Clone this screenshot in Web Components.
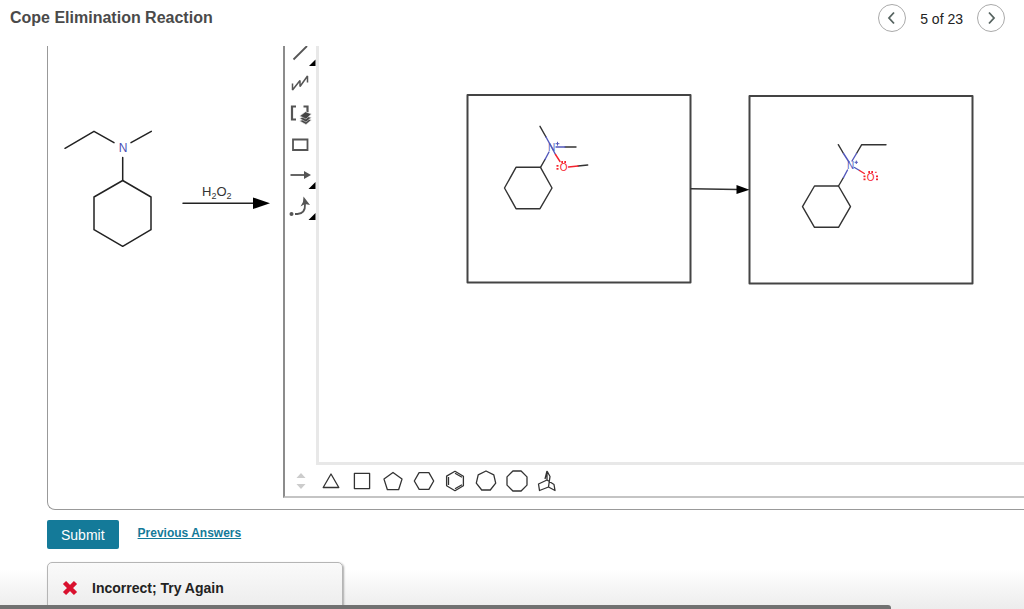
<!DOCTYPE html>
<html lang="en">
<head>
<meta charset="utf-8">
<meta name="viewport" content="width=device-width, initial-scale=1">
<title>Cope Elimination Reaction</title>
<style>
    body {
        margin: 0;
        height: 100vh;
        overflow: hidden;
        font-family: "Liberation Sans", Arial, sans-serif;
        color: #222;
        background: linear-gradient(to top, #ececec, #fff 40px);
    }
</style>
</head>
<body>
<question-page>
    <page-header slot="header" heading="Cope Elimination Reaction" position="5 of 23"></page-header>
    <work-panel>
        <reaction-prompt slot="prompt"></reaction-prompt>
        <structure-editor slot="editor"></structure-editor>
    </work-panel>
    <answer-actions></answer-actions>
    <answer-feedback>Incorrect; Try Again</answer-feedback>
    <scroll-strip slot="overlay"></scroll-strip>
</question-page>

<script>
function attach(element, html) {
    const template = document.createElement('template');
    template.innerHTML = html;
    element.attachShadow({ mode: 'open' });
    element.shadowRoot.appendChild(template.content.cloneNode(true));
}

class QuestionPage extends HTMLElement {
    constructor() {
        super();
        attach(this, `
    <style>
        :host {
            display: block;
        }
        main {
            display: flex;
            flex-direction: column;
            padding-left: 47px;
        }
    </style>
    <slot name="header"></slot>
    <main><slot></slot></main>
    <slot name="overlay"></slot>
    `);
    }
}

class PageHeader extends HTMLElement {
    constructor() {
        super();
        attach(this, `
    <style>
        :host {
            display: flex;
            justify-content: space-between;
            height: 46px;
            padding: 0 19px 0 10px;
        }
        h1 {
            margin: 8px 0 0;
            font-size: 16px;
            line-height: 20px;
            color: #4a4a4a;
        }
        nav {
            display: flex;
            align-items: center;
            gap: 14px;
            height: 36px;
            font-size: 14px;
        }
        span {
            padding-top: 2px;
        }
        button {
            width: 28px;
            height: 28px;
            padding: 0;
            border: 1px solid #aaa;
            border-radius: 50%;
            background: #fff;
        }
        svg {
            display: block;
            margin: auto;
            fill: none;
            stroke: #566360;
            stroke-width: 1.8;
        }
    </style>
    <h1></h1>
    <nav aria-label="Questions">
        <button type="button" aria-label="Previous question">
            <svg width="14" height="14" viewBox="0 0 14 14"><path d="M9 1.500 4 7l5 5.500"/></svg>
        </button>
        <span></span>
        <button type="button" aria-label="Next question">
            <svg width="14" height="14" viewBox="0 0 14 14"><path d="M5 1.500 10 7l-5 5.500"/></svg>
        </button>
    </nav>
    `);
    }

    connectedCallback() {
        this.shadowRoot.querySelector('h1').textContent = this.getAttribute('heading');
        this.shadowRoot.querySelector('span').textContent = this.getAttribute('position');
    }
}

class WorkPanel extends HTMLElement {
    constructor() {
        super();
        attach(this, `
    <style>
        :host {
            display: grid;
            grid-template-columns: 235px 1fr;
            padding-bottom: 11px;
            border: solid #999;
            border-width: 0 0 1px 1px;
            border-bottom-left-radius: 8px;
        }
    </style>
    <slot name="prompt"></slot>
    <slot name="editor"></slot>
    `);
    }
}

class ReactionPrompt extends HTMLElement {
    constructor() {
        super();
        attach(this, `
    <style>
        :host {
            display: block;
        }
        svg {
            display: block;
            fill: none;
            stroke: #222;
            stroke-width: 1.5;
            stroke-linecap: round;
            stroke-linejoin: round;
        }
        text {
            stroke: none;
            fill: #333;
            font-size: 13px;
        }
        .sub {
            font-size: 9px;
        }
        .nitrogen {
            fill: #4a50b4;
            font-size: 12px;
            text-anchor: middle;
        }
        .head {
            fill: #000;
            stroke: none;
        }
    </style>
    <svg width="235" height="220" viewBox="48 46 235 220" role="img" aria-label="N-ethyl-N-methylcyclohexanamine treated with hydrogen peroxide">
        <path d="M65 148.300 94 131.300 114 142.700M131 142.700 151.300 131.300M122.700 157.500V180.500"/>
        <path d="M122.700 180.500 151 197V229.700L122.700 246.300 94 229.700V197Z"/>
        <text class="nitrogen" x="123" y="152">N</text>
        <text x="202" y="196">H<tspan class="sub" dy="3">2</tspan><tspan dy="-3">O</tspan><tspan class="sub" dy="3">2</tspan></text>
        <path d="M183 203.300H254"/>
        <path class="head" d="M253 197.500 270 203.300 253 209Z"/>
    </svg>
    `);
    }
}

class StructureEditor extends HTMLElement {
    constructor() {
        super();
        attach(this, `
    <style>
        :host {
            display: grid;
            grid-template-columns: 31px 1fr;
            grid-template-rows: 419px 31px;
            border: solid #8c8c8c;
            border-width: 0 0 2px 2px;
            border-bottom-color: #c4c4c4;
            overflow: hidden;
        }
        sketch-canvas {
            border: solid #e8e8e8;
            border-width: 0 0 3px 3px;
        }
        .pager {
            display: flex;
            flex-direction: column;
            align-items: center;
            justify-content: center;
            gap: 6px;
        }
        .pager button {
            padding: 0;
            border: 0;
            background: none;
        }
        .pager svg {
            display: block;
            fill: #ccc;
        }
    </style>
    <tool-column></tool-column>
    <sketch-canvas></sketch-canvas>
    <div class="pager">
        <button type="button" aria-label="Previous templates"><svg width="10" height="5"><path d="M5 0 9.500 5H.5Z"/></svg></button>
        <button type="button" aria-label="Next templates"><svg width="10" height="5"><path d="M5 5 9.500 0H.5Z"/></svg></button>
    </div>
    <ring-templates></ring-templates>
    `);
    }
}

const CORNER = '<path class="corner" d="M30.500 21V28H23.500Z"/>';

const TOOLS = [
    ['Bond', '<path d="M8.500 22.500 22 9"/><path class="corner" d="M30.500 22.500V29H24Z"/>'],
    ['Chain', '<path class="thin" d="M7.500 15.500V22L15 12.500V18.500L22.500 8V14.500"/>'],
    ['Repeating group', `
        <path class="thick" d="M11 7.500H7V20.500H11M18.500 7.500H22.500V13"/>
        <path class="layer" d="M14.800 22 20 19.500 26.300 21 21 25.500Z"/>
        <path class="layer" d="M14.800 19.500 20 17 26.300 18.500 21 23Z"/>
        <path class="layer" d="M14.800 17 20.500 12.800 26.300 15 21 20Z"/>`],
    ['Rectangle', '<path d="M8 9.500H22.500V20H8Z"/>'],
    ['Arrow', '<path d="M5.500 14H20"/><path class="solid" d="M19 10 26 14 19 18Z"/>' + CORNER],
    ['Electron flow', `
        <circle class="solid" cx="6.500" cy="22" r="2"/>
        <path d="M10 22H12.500Q20.500 21.500 20 12"/>
        <path class="solid" d="M18.500 4.500 25 13 20 12 15.500 14.500 18 10Z"/>` + CORNER]
];

class ToolColumn extends HTMLElement {
    constructor() {
        super();
        attach(this, `
    <style>
        :host {
            display: block;
            overflow: hidden;
        }
        /* the strip is scrolled, so the first tool is cut at the top */
        div {
            display: flex;
            flex-direction: column;
            margin-top: -9px;
        }
        button {
            padding: 0;
            border: 0;
            background: none;
        }
        svg {
            display: block;
            fill: none;
            stroke: #555;
            stroke-width: 1.8;
        }
        .thin {
            stroke-width: 1.5;
            stroke-linejoin: bevel;
        }
        .thick {
            stroke-width: 2.2;
        }
        .solid {
            fill: #555;
            stroke: none;
        }
        .corner {
            fill: #000;
            stroke: none;
        }
        .layer {
            fill: #444;
            stroke: #ddd;
            stroke-width: 0.6;
        }
    </style>
    <div role="toolbar" aria-label="Drawing tools">
        ${TOOLS.map(([name, icon]) => `<button type="button" aria-label="${name}"><svg width="31" height="31">${icon}</svg></button>`).join('')}
    </div>
    `);
    }
}

class SketchCanvas extends HTMLElement {
    constructor() {
        super();
        attach(this, `
    <style>
        :host {
            display: block;
            overflow: hidden;
            background: #fff;
        }
        svg {
            display: block;
            fill: none;
            stroke: #333;
            stroke-width: 1.4;
            stroke-linecap: round;
            stroke-linejoin: round;
        }
        .frame {
            stroke: #444;
            stroke-width: 2;
        }
        .head {
            fill: #000;
            stroke: none;
        }
        .blue {
            stroke: #5257bb;
        }
        .red {
            stroke: #f5222d;
        }
        text {
            stroke: none;
            font-size: 10px;
            text-anchor: middle;
        }
        text.n {
            fill: #5257bb;
        }
        text.o {
            fill: #f5222d;
        }
        .charge {
            stroke-width: 1;
        }
        .pairs {
            fill: #f5222d;
            stroke: none;
        }
    </style>
    <svg width="705" height="416" viewBox="319 46 705 416" role="img" aria-label="Reaction scheme with two boxes">
        <rect class="frame" x="467.500" y="95" width="223" height="187.500"/>
        <rect class="frame" x="749.500" y="96" width="223" height="187.500"/>
        <path d="M691 188.700 738 189.500"/>
        <path class="head" d="M736.500 185 749.500 189.700 736.500 194Z"/>

        <path d="M540.500 167.300 552 188 540 208.700H516L504.500 188 516 167.300Z"/>
        <path d="M540 126.300 546 137M565 147H576M540.500 167.300 545 159.500M578 166 587.700 165"/>
        <path class="blue" d="M546 137 551.500 147 555.500 154.500M556 147H565M549 152 545 159.500"/>
        <path class="red" d="M555.500 154.500 560 161.500M568.500 167 578 166"/>
        <text class="n" x="551.500" y="151">N</text>
        <path class="blue charge" d="M556 143.700H559M557.500 142.200V145.200"/>
        <text class="o" x="563.700" y="171">O</text>
        <g class="pairs">
            <rect x="556.500" y="165" width="2" height="1.700"/>
            <rect x="556.500" y="168" width="2" height="1.700"/>
            <rect x="561.300" y="161" width="1.700" height="2"/>
            <rect x="564.300" y="161" width="1.700" height="2"/>
        </g>

        <path d="M838.500 186 850.500 206.700 838.500 227.300H814.500L802.500 206.700 814.500 186Z"/>
        <path d="M838.300 144.700 843.500 153.500M856.500 153.500 861.700 144.700H886M838.500 186 843.500 177.500"/>
        <path class="blue" d="M843.500 153.500 849 162M856.500 153.500 852 161M847.500 170 843.500 177.500M854.500 167.500 859.500 170.500"/>
        <path class="red" d="M859.500 170.500 864.300 173.500"/>
        <text class="n" x="850.500" y="169">N</text>
        <path class="blue charge" d="M855 162.300H857.500M856.300 161V163.600"/>
        <text class="o" x="870.700" y="181">O</text>
        <path class="red charge" d="M875.300 172.300H876.300"/>
        <g class="pairs">
            <rect x="863.500" y="175.500" width="2" height="1.700"/>
            <rect x="863.500" y="178.500" width="2" height="1.700"/>
            <rect x="876" y="175.500" width="2" height="1.700"/>
            <rect x="876" y="178.500" width="2" height="1.700"/>
            <rect x="868.300" y="171" width="1.700" height="2"/>
            <rect x="871.300" y="171" width="1.700" height="2"/>
        </g>
    </svg>
    `);
    }
}

// closed regular polygon centred at 15,15; turn is the angle of the first corner in degrees
function ring(sides, radius, turn = -90, cy = 15) {
    const points = [];
    for (let i = 0; i < sides; i++) {
        const angle = (turn + i * 360 / sides) * Math.PI / 180;
        points.push((15 + radius * Math.cos(angle)).toFixed(1) + ',' + (cy + radius * Math.sin(angle)).toFixed(1));
    }
    return `<polygon points="${points.join(' ')}"/>`;
}

const RINGS = [
    ['Cyclopropane', ring(3, 9, -90, 17)],
    ['Cyclobutane', ring(4, 10.8, -45)],
    ['Cyclopentane', ring(5, 9.5, -90, 16)],
    ['Cyclohexane', ring(6, 9.7, 0)],
    ['Benzene', ring(6, 9.7) + '<path d="M8.500 11V19M15 7.300 22 11.300M15 22.700 22 18.700"/>'],
    ['Cycloheptane', ring(7, 10)],
    ['Cyclooctane', ring(8, 10.8, 22.5)],
    ['Bicyclooctane', '<path d="M14 5V14L5.500 18 6.500 24.500 15.500 21 22 24.500 21 18.500 14 14M14 5 17 10.500 15.500 21M14 5 12 13"/>']
];

class RingTemplates extends HTMLElement {
    constructor() {
        super();
        attach(this, `
    <style>
        :host {
            display: flex;
            align-items: flex-end;
            gap: 1px;
        }
        button {
            padding: 0;
            border: 0;
            background: none;
        }
        svg {
            display: block;
            fill: none;
            stroke: #333;
            stroke-width: 1.3;
            stroke-linejoin: round;
        }
    </style>
    ${RINGS.map(([name, shape]) => `<button type="button" aria-label="${name}"><svg width="30" height="30">${shape}</svg></button>`).join('')}
    `);
    }
}

class AnswerActions extends HTMLElement {
    constructor() {
        super();
        attach(this, `
    <style>
        :host {
            display: flex;
            align-items: center;
            gap: 19px;
            margin: 10px 0 13px;
        }
        button {
            height: 29px;
            padding: 0 14px;
            border: 0;
            border-radius: 2px;
            font: 14px "Liberation Sans", Arial, sans-serif;
            color: #fff;
            background: #147a99;
        }
        a {
            padding-bottom: 3px;
            font-size: 12px;
            font-weight: bold;
            color: #147a99;
        }
    </style>
    <button type="submit">Submit</button>
    <a href="#previous">Previous Answers</a>
    `);
    }
}

class AnswerFeedback extends HTMLElement {
    constructor() {
        super();
        attach(this, `
    <style>
        :host {
            display: flex;
            align-items: center;
            gap: 14px;
            box-sizing: border-box;
            width: 296px;
            height: 51px;
            padding-left: 14px;
            border: 1px solid #b5b5b5;
            border-radius: 5px;
            box-shadow: 1px 1px 2px #aaa;
            background: linear-gradient(#fafafa, #ebebeb);
            font-size: 14px;
            font-weight: bold;
        }
        svg {
            stroke: #d9112e;
            stroke-width: 4.5;
        }
    </style>
    <svg width="16" height="16" viewBox="0 0 16 16" aria-hidden="true"><path d="M2.500 2.500 13.500 13.500M13.500 2.500 2.500 13.500"/></svg>
    <span><slot></slot></span>
    `);
    }
}

class ScrollStrip extends HTMLElement {
    constructor() {
        super();
        attach(this, `
    <style>
        :host {
            position: fixed;
            left: 0;
            bottom: 0;
            width: 87%;
            height: 4px;
            border-top-right-radius: 3px;
            background: #717171;
        }
    </style>
    `);
    }
}

customElements.define('question-page', QuestionPage);
customElements.define('page-header', PageHeader);
customElements.define('work-panel', WorkPanel);
customElements.define('reaction-prompt', ReactionPrompt);
customElements.define('tool-column', ToolColumn);
customElements.define('sketch-canvas', SketchCanvas);
customElements.define('ring-templates', RingTemplates);
customElements.define('structure-editor', StructureEditor);
customElements.define('answer-actions', AnswerActions);
customElements.define('answer-feedback', AnswerFeedback);
customElements.define('scroll-strip', ScrollStrip);
</script>
</body>
</html>
